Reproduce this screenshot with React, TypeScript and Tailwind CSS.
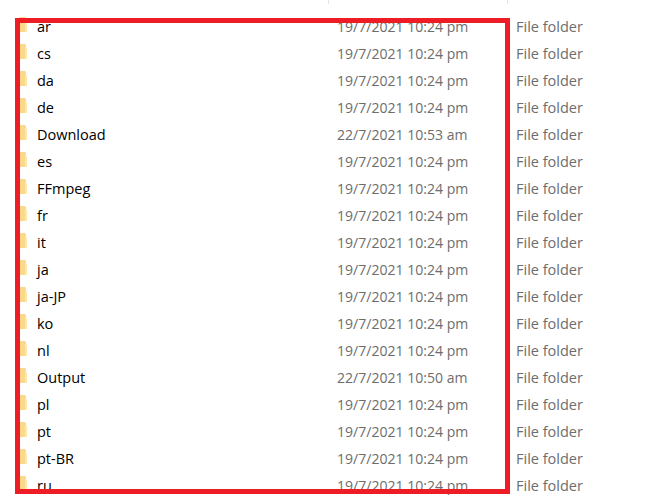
const rows = [
  ["ar", "19/7/2021 10:24 pm"],
  ["cs", "19/7/2021 10:24 pm"],
  ["da", "19/7/2021 10:24 pm"],
  ["de", "19/7/2021 10:24 pm"],
  ["Download", "22/7/2021 10:53 am"],
  ["es", "19/7/2021 10:24 pm"],
  ["FFmpeg", "19/7/2021 10:24 pm"],
  ["fr", "19/7/2021 10:24 pm"],
  ["it", "19/7/2021 10:24 pm"],
  ["ja", "19/7/2021 10:24 pm"],
  ["ja-JP", "19/7/2021 10:24 pm"],
  ["ko", "19/7/2021 10:24 pm"],
  ["nl", "19/7/2021 10:24 pm"],
  ["Output", "22/7/2021 10:50 am"],
  ["pl", "19/7/2021 10:24 pm"],
  ["pt", "19/7/2021 10:24 pm"],
  ["pt-BR", "19/7/2021 10:24 pm"],
  ["ru", "19/7/2021 10:24 pm"],
];

function Folder() {
  return (
    <svg width="12" height="15" viewBox="0 0 12 15" className="mb-[4px] shrink-0">
      <path d="M0 0H6L7 1V15H0Z" fill="#fbd98a" />
      <path d="M6 3H7L8 5V15H6Z" fill="#fde7ae" />
    </svg>
  );
}

export default function App() {
  return (
    <div className="relative h-[500px] w-[646px] overflow-hidden bg-white font-['Open_Sans',sans-serif] text-[14.5px]">
      {/* Column dividers */}
      <div className="flex h-[4px] pl-[328px]">
        <div className="w-[180px] border-x border-[#e5e5e5]"></div>
      </div>

      {/* File rows */}
      <div className="pt-[9px]">
        {rows.map(([name, date], index) => (
          <div key={index} className="flex h-[27px] items-center pl-[19px]">
            <Folder />
            <span className="ml-[6px] w-[300px] text-[#000000]">{name}</span>
            <span className="w-[179px] text-[14.05px] text-[#6d6d6d]">{date}</span>
            <span className="text-[#6d6d6d]">File folder</span>
          </div>
        ))}
      </div>

      {/* Red highlight */}
      <div className="absolute left-[15px] top-[18px] h-[476px] w-[495px] border-[5px] border-[#ee1c25]"></div>
    </div>
  );
}
